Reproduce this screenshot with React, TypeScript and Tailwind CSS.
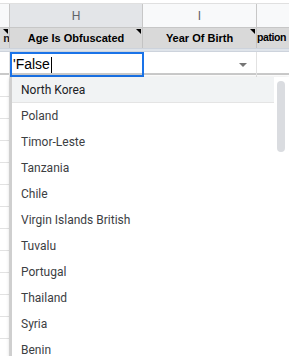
const countries = [
  "North Korea",
  "Poland",
  "Timor-Leste",
  "Tanzania",
  "Chile",
  "Virgin Islands British",
  "Tuvalu",
  "Portugal",
  "Thailand",
  "Syria",
  "Benin",
];

function NoteMark() {
  return (
    <span className="absolute right-[1px] top-[1px] h-0 w-0 border-l-[5px] border-t-[5px] border-l-transparent border-t-black" />
  );
}

export default function App() {
  return (
    <div className="relative h-[356px] w-[289px] overflow-hidden bg-white font-['Liberation_Sans',Arial,sans-serif]">
      <div className="h-[4px] border-b border-[#e0e0e0] bg-white" />

      {/* column letters */}
      <div className="grid h-[24px] grid-cols-[10px_133px_114px_32px] border-b border-[#c7c7c7] text-[12px] text-[#5f6368]">
        <div className="border-r border-[#c7c7c7] bg-[#f8f9fa]" />
        <div className="flex items-center justify-center border-r border-[#c7c7c7] bg-[#e3e5e8]">H</div>
        <div className="flex items-center justify-center border-r border-[#c7c7c7] bg-[#f8f9fa]">I</div>
        <div className="bg-[#f8f9fa]" />
      </div>

      {/* header row */}
      <div className="grid h-[20px] grid-cols-[10px_133px_114px_32px] bg-[#d9d9d9] text-[11px] font-bold text-black">
        <div className="relative flex items-center justify-end overflow-hidden border-r border-[#c3c3c3]">
          <span className="-mr-[1px] text-[#202124]">n</span>
          <NoteMark />
        </div>
        <div className="relative flex items-center justify-center border-r border-[#c3c3c3]">
          Age Is Obfuscated
          <NoteMark />
        </div>
        <div className="relative flex items-center justify-center border-r border-[#c3c3c3]">
          Year Of Birth
          <NoteMark />
        </div>
        <div className="flex items-center whitespace-nowrap text-[10.5px] tracking-[-0.4px]">pation</div>
      </div>

      {/* frozen divider */}
      <div className="h-[4px] border-y border-[#cdd3dc] bg-[#dfe4ea]" />

      {/* edit row */}
      <div className="grid h-[23px] grid-cols-[10px_134px_113px_32px] border-b-2 border-[#c9c9c9]">
        <div className="border-r border-[#e2e2e2]" />
        <div className="flex items-center border-2 border-[#1a73e8] pl-[1px] text-[14px] text-black">
          <span>'False</span>
          <span className="ml-[1px] h-[16px] w-[1px] bg-black" />
        </div>
        <div className="flex items-center justify-end border-r border-[#e2e2e2] pr-[9px]">
          <span className="h-0 w-0 border-x-[4px] border-t-[4px] border-x-transparent border-t-[#757575]" />
        </div>
        <div />
      </div>

      {/* grid rows under the menu */}
      <div className="flex flex-col">
        {Array.from({ length: 13 }).map((_, i) => (
          <div key={i} className="h-[22px] w-[10px] border-b border-r border-[#e2e2e2]" />
        ))}
      </div>

      {/* dropdown menu */}
      <div className="absolute left-[10px] top-[77px] h-[290px] w-[279px] border-l-2 border-[#cfcfcf] bg-white font-['Roboto',Arial,sans-serif] shadow-[0_1px_4px_rgba(0,0,0,0.2)]">
        <div className="flex">
          <ul className="w-[262px]">
            {countries.map((c, i) => (
              <li
                key={c}
                className={
                  i === 0
                    ? "flex h-[26px] items-center border-b border-[#e4e4e4] bg-[#f1f3f4] pl-[9px] text-[12px] text-[#202124]"
                    : "flex h-[26px] items-center pl-[9px] text-[12px] text-[#3c4043]"
                }
              >
                {c}
              </li>
            ))}
          </ul>
          <div className="ml-[3px] mt-[4px] h-[71px] w-[8px] rounded-full bg-[#dadce0]" />
        </div>
      </div>
    </div>
  );
}
